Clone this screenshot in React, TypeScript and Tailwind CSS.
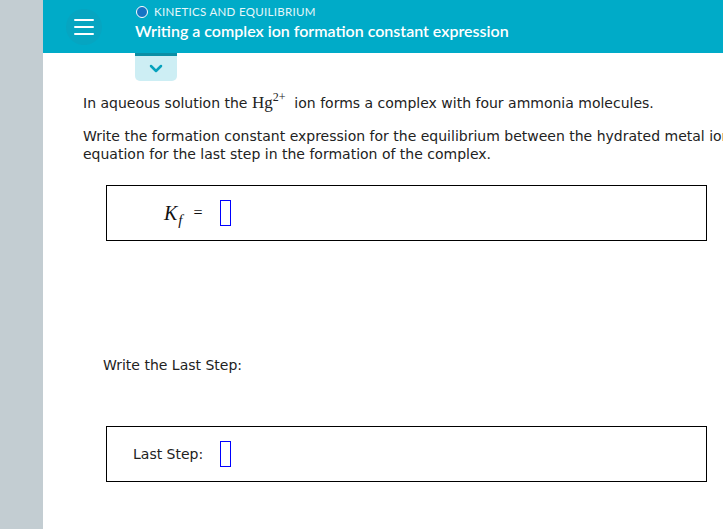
import React from "react";

export default function App() {
  const body = { fontFamily: '"DejaVu Sans", Verdana, sans-serif' };
  const serif = { fontFamily: '"Liberation Serif", "Times New Roman", serif' };
  return (
    <div className="flex w-[723px] h-[529px] overflow-hidden bg-white">
      <div className="w-[43px] shrink-0 bg-[#c3cdd2]" />
      <div className="flex-1 flex flex-col min-w-0">
        <div className="h-[53px] shrink-0 bg-[#00abc8] flex items-center" style={{ fontFamily: 'Lato, "Open Sans", sans-serif' }}>
          <div className="ml-[23px] w-[36px] h-[36px] rounded-full bg-[#06a5c1] flex flex-col items-center justify-center gap-[5px]">
            <div className="w-[20px] h-[2px] bg-white rounded" />
            <div className="w-[20px] h-[2px] bg-white rounded" />
            <div className="w-[20px] h-[2px] bg-white rounded" />
          </div>
          <div className="ml-[33px] flex flex-col text-white mt-[-10px]">
            <div className="flex items-center gap-[6px] h-[18px]">
              <div className="w-[12px] h-[12px] rounded-full bg-[#1674c4] border-[1.5px] border-white ml-[1px]" />
              <span className="text-[11.5px] tracking-[0.3px] text-[#e6f7fa]">KINETICS AND EQUILIBRIUM</span>
            </div>
            <div className="text-[16px] font-semibold leading-[20px]">Writing a complex ion formation constant expression</div>
          </div>
        </div>
        <div className="ml-[92px] w-[42px] h-[28px] bg-[#cdeef4] rounded-b-[5px] border-t-[3px] border-[#0b8ea5] flex items-center justify-center">
          <svg width="14" height="9" viewBox="0 0 14 9">
            <path d="M2 2 L7 7 L12 2" stroke="#07a2bd" strokeWidth="2.5" fill="none" strokeLinecap="round" strokeLinejoin="round" />
          </svg>
        </div>
        <div className="ml-[40px] text-[14px] text-[#222] leading-[18px] whitespace-nowrap" style={body}>
          <p className="mt-[13px] flex items-end">
            <span>In aqueous solution the&nbsp;</span>
            <span className="relative text-[17px]" style={serif}>
              Hg<sup className="text-[12px] relative top-[-7px]">2+</sup>
            </span>
            <span>&nbsp;&nbsp;ion forms a complex with four ammonia molecules.</span>
          </p>
          <p className="mt-[15px]">
            Write the formation constant expression for the equilibrium between the hydrated metal ion and ammonia and then write the
          </p>
          <p>equation for the last step in the formation of the complex.</p>
        </div>
        <div className="ml-[63px] mt-[22px] w-[601px] h-[56px] border-[1.5px] border-black flex items-center">
          <span className="ml-[57px] text-[20px] italic text-[#111]" style={serif}>
            K<sub className="text-[15px] italic relative top-[5px] ml-[1px]">f</sub>
          </span>
          <span className="ml-[11px] text-[16px] text-[#111]" style={serif}>=</span>
          <div className="ml-[17px] w-[11px] h-[26px] border-[1.5px] border-[#0000ff]" />
        </div>
        <div className="ml-[60px] mt-[114px] text-[14px] text-[#222]" style={body}>Write the Last Step:</div>
        <div className="ml-[63px] mt-[50px] w-[601px] h-[56px] border-[1.5px] border-black flex items-center" style={body}>
          <span className="ml-[26px] text-[14px] text-[#222]">Last Step:</span>
          <div className="ml-[17px] w-[11px] h-[26px] border-[1.5px] border-[#0000ff]" />
        </div>
      </div>
    </div>
  );
}
